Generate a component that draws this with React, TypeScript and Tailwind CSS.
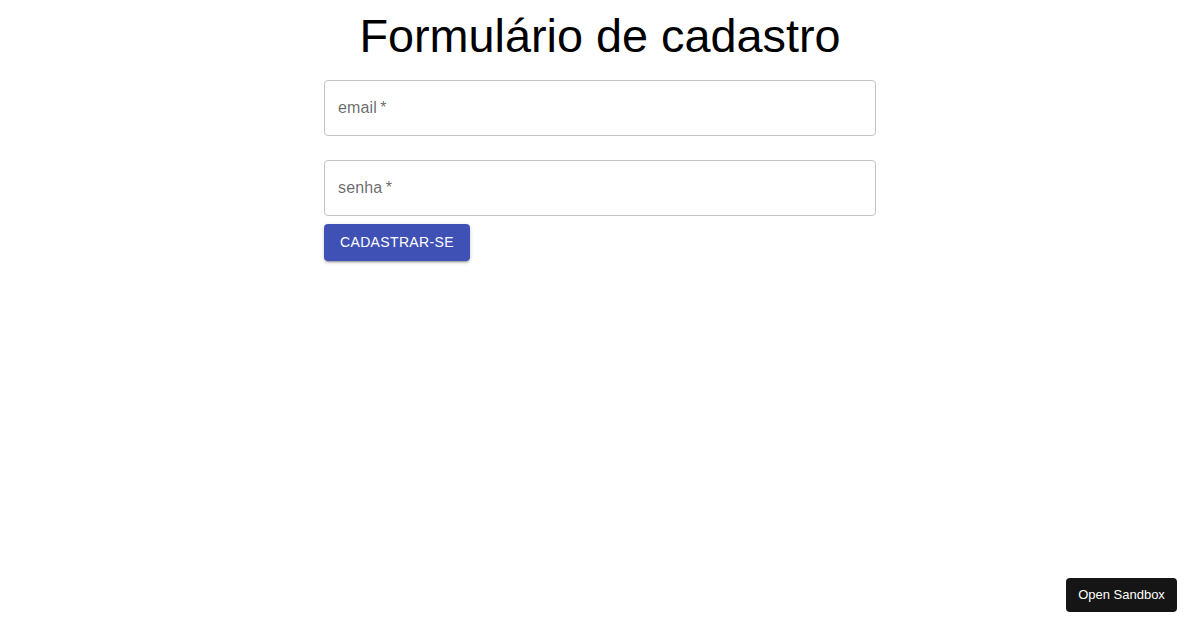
import React from "react";

export default function App() {
  return (
    <div className="min-h-[630px] bg-white relative">
      <div className="flex flex-col items-center">
        <h1 className="text-[46.8px] leading-[55px] mt-[9px] text-black font-['Liberation_Sans',Arial,sans-serif]">
          Formulário de cadastro
        </h1>
        <form className="w-[552px] mt-[16px] flex flex-col font-['Liberation_Sans',Arial,sans-serif]">
          <div className="h-[56px] rounded-[4px] border border-[#c4c4c4] flex items-center px-[13px]">
            <span className="text-[16px] text-[rgba(0,0,0,0.6)] tracking-[0.00938em]">email{"\u2009"}*</span>
          </div>
          <div className="h-[56px] mt-[24px] rounded-[4px] border border-[#c4c4c4] flex items-center px-[13px]">
            <span className="text-[16px] text-[rgba(0,0,0,0.6)] tracking-[0.00938em]">senha{"\u2009"}*</span>
          </div>
          <div className="mt-[8px]">
            <button
              type="button"
              className="bg-[#3f51b5] text-white text-[14px] font-normal uppercase leading-[24.5px] tracking-[0.35px] px-[16px] py-[6px] rounded-[4px] shadow-[0px_3px_1px_-2px_rgba(0,0,0,0.2),0px_2px_2px_0px_rgba(0,0,0,0.14),0px_1px_5px_0px_rgba(0,0,0,0.12)] font-['Liberation_Sans',Arial,sans-serif]"
            >
              Cadastrar-se
            </button>
          </div>
        </form>
      </div>
      <div className="absolute right-[23px] top-[578px] h-[34px] w-[111px] rounded-[4px] bg-[#151515] text-white text-[13px] flex items-center justify-center font-['Liberation_Sans',Arial,sans-serif]">
        Open Sandbox
      </div>
    </div>
  );
}
